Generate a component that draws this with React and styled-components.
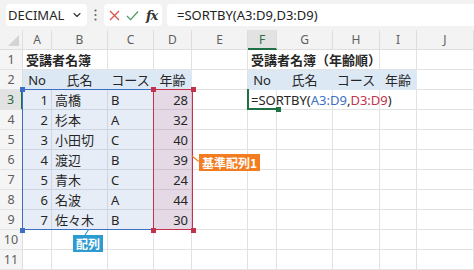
import React from 'react'
import styled, { createGlobalStyle } from 'styled-components'
import { ChevronDown } from 'lucide-react'

const FONT = `"Noto Sans", "Noto Sans CJK JP", sans-serif`

const GlobalStyle = createGlobalStyle`
  html, body { margin: 0; padding: 0; background: #fff; }
  body { font-family: ${FONT}; width: 474px; height: 270px; overflow: hidden; }
`

const COLS = ['A', 'B', 'C', 'D', 'E', 'F', 'G', 'H', 'I', 'J']
const WIDTHS = [29, 56, 46, 38, 56, 29, 56, 47, 37]
const HEAD_W = 23
const ROW_H = 20
const ROWS = 11

const colLeft = (i) => HEAD_W + WIDTHS.slice(0, i).reduce((a, b) => a + b, 0)
const rowTop = (r) => ROW_H * r // header row is 0

const BLUE = '#3c6fc3'
const RED = '#c4314b'
const GREEN = '#1f7145'
const HEADBLUE = '#dde8f5'
const FILLBLUE = '#e7edf6'
const FILLRED = '#e4d9e4'

const Page = styled.div`
  width: 474px;
  height: 270px;
  display: flex;
  flex-direction: column;
  overflow: hidden;
`

const TopBar = styled.div`
  height: 30px;
  flex: none;
  background: #f2f2f2;
  display: flex;
  align-items: center;
  padding-left: 6px;
  box-sizing: border-box;
`

const Box = styled.div`
  height: 22px;
  background: #fff;
  border-radius: 4px;
  display: flex;
  align-items: center;
  box-sizing: border-box;
`

const NameBox = styled(Box)`
  width: 81px;
  padding: 0 4px 0 2px;
  justify-content: space-between;
  font-size: 13px;
  color: #262626;
`

const Dots = styled.div`
  width: 17px;
  display: flex;
  justify-content: center;
`

const FxBox = styled(Box)`
  width: 58px;
  padding: 0 4px 0 5px;
  gap: 6px;
`

const FxText = styled.span`
  font-family: "DejaVu Serif", "Liberation Serif", serif;
  font-style: italic;
  font-weight: bold;
  font-size: 13px;
  color: #333;
  letter-spacing: -1px;
  margin-left: 1px;
`

const FormulaBox = styled(Box)`
  flex: 1;
  margin-left: 5px;
  border-radius: 4px 0 0 4px;
  padding-left: 10px;
  font-size: 13px;
  color: #222;
`

const Sheet = styled.div`
  position: relative;
  flex: 1;
`

const Grid = styled.div`
  display: grid;
  grid-template-columns: ${HEAD_W}px ${WIDTHS.map((w) => w + 'px').join(' ')} 1fr;
  grid-auto-rows: ${ROW_H}px;
`

const Corner = styled.div`
  background: #f3f3f3;
  border-right: 1px solid #dedede;
  border-bottom: 1px solid #dedede;
  position: relative;
  &::after {
    content: '';
    position: absolute;
    right: 3px;
    bottom: 3px;
    border-left: 11px solid transparent;
    border-bottom: 11px solid #d4d4d4;
  }
`

const ColHead = styled.div`
  background: ${(p) => (p.$active ? '#e2e2e2' : '#f3f3f3')};
  border-right: 1px solid #dedede;
  border-bottom: ${(p) => (p.$active ? `2px solid ${GREEN}` : '1px solid #dedede')};
  box-sizing: border-box;
  display: flex;
  align-items: center;
  justify-content: center;
  font-size: 12px;
  color: ${(p) => (p.$active ? '#2d6a46' : '#5e5e5e')};
`

const RowHead = styled.div`
  background: ${(p) => (p.$active ? '#e2e2e2' : '#f5f5f5')};
  border-right: ${(p) => (p.$active ? `2px solid ${GREEN}` : '1px solid #dedede')};
  border-bottom: 1px solid #e4e4e4;
  box-sizing: border-box;
  display: flex;
  align-items: center;
  justify-content: center;
  font-size: 12.5px;
  color: ${(p) => (p.$active ? '#2d6a46' : '#5e5e5e')};
`

const Cell = styled.div`
  background: ${(p) => p.$bg || '#fff'};
  border-right: 1px solid ${(p) => p.$line || '#e2e2e2'};
  border-bottom: 1px solid ${(p) => p.$hline || p.$line || '#e2e2e2'};
  box-sizing: border-box;
  padding: 0 3px;
  display: flex;
  align-items: center;
  justify-content: ${(p) => p.$align || 'flex-start'};
  font-size: 13px;
  font-weight: ${(p) => (p.$bold ? 700 : 400)};
  color: #262626;
  white-space: nowrap;
  overflow: ${(p) => (p.$spill ? 'visible' : 'hidden')};
  position: ${(p) => (p.$spill ? 'relative' : 'static')};
  z-index: ${(p) => (p.$spill ? 2 : 'auto')};
`

const Ref = styled.span`
  color: ${(p) => p.$c};
`

const Caret = styled.span`
  display: inline-block;
  width: 1px;
  height: 15px;
  background: #111;
  margin-left: 2px;
`

// coloured frame that Excel draws round a referenced range while editing
const RangeBox = styled.div`
  position: absolute;
  border: 1.5px solid ${(p) => p.$c};
  box-sizing: border-box;
  pointer-events: none;
  z-index: 3;
`

const corners = {
  tl: 'left: -3.5px; top: -3.5px;',
  tr: 'right: -3.5px; top: -3.5px;',
  bl: 'left: -3.5px; bottom: -3.5px;',
  br: 'right: -3.5px; bottom: -3.5px;',
}

const Handle = styled.i`
  position: absolute;
  width: 5px;
  height: 5px;
  background: ${(p) => p.$c};
  ${(p) => corners[p.$at]}
`

const ActiveEdge = styled.div`
  position: absolute;
  border-left: 2px solid ${GREEN};
  border-bottom: 2px solid ${GREEN};
  box-sizing: border-box;
  z-index: 3;
`

const Callout = styled.div`
  position: absolute;
  background: ${(p) => p.$c};
  color: #fff;
  font-family: "Noto Sans CJK JP", sans-serif;
  font-weight: 700;
  font-size: 12px;
  line-height: 17px;
  padding: 0 3px;
  z-index: 5;
  & > svg {
    position: absolute;
    overflow: visible;
  }
`

const ages = [28, 32, 40, 39, 24, 44, 30]
const names = ['高橋', '杉本', '小田切', '渡辺', '青木', '名波', '佐々木']
const course = ['B', 'A', 'C', 'B', 'C', 'A', 'B']
const heads = ['No', '氏名', 'コース', '年齢']

const cellProps = (r, c) => {
  // r: 1-based row, c: 0-based col index (A=0)
  if (r === 1) {
    if (c === 0) return { text: '受講者名簿', bold: true, spill: true, line: '#fff', hline: '#e2e2e2' }
    if (c === 5) return { text: '受講者名簿（年齢順）', bold: true, spill: true, line: '#fff', hline: '#e2e2e2' }
    if (c === 6) return { line: '#fff', hline: '#e2e2e2' }
    return {}
  }
  if (r === 2) {
    if (c <= 3) return { text: heads[c], bg: HEADBLUE, line: HEADBLUE, align: 'center' }
    if (c >= 5 && c <= 8) return { text: heads[c - 5], bg: HEADBLUE, line: HEADBLUE, align: 'center' }
    return {}
  }
  if (r >= 3 && r <= 9) {
    const i = r - 3
    if (c === 0) return { text: String(i + 1), bg: FILLBLUE, line: '#cdd5e2', align: 'flex-end' }
    if (c === 1) return { text: names[i], bg: FILLBLUE, line: '#cdd5e2' }
    if (c === 2) return { text: course[i], bg: FILLBLUE, line: '#cdd5e2' }
    if (c === 3) return { text: String(ages[i]), bg: FILLRED, line: '#d3c3d2', align: 'flex-end' }
  }
  return {}
}

const Formula = () => (
  <>
    =SORTBY(<Ref $c={BLUE}>A3:D9</Ref>,<Ref $c={RED}>D3:D9</Ref>)
  </>
)

export default function App() {
  const cells = [<Corner key="corner" />]
  COLS.forEach((c, i) => cells.push(<ColHead key={'h' + c} $active={i === 5}>{c}</ColHead>))
  for (let r = 1; r <= ROWS; r++) {
    cells.push(<RowHead key={'r' + r} $active={r === 3}>{r}</RowHead>)
    COLS.forEach((c, i) => {
      if (r === 3 && i === 5) {
        cells.push(
          <Cell key={c + r} $spill>
            <Formula />
            <Caret />
          </Cell>
        )
        return
      }
      const p = cellProps(r, i)
      cells.push(
        <Cell key={c + r} $bg={p.bg} $line={p.line} $hline={p.hline} $align={p.align} $bold={p.bold} $spill={p.spill}>
          {p.text}
        </Cell>
      )
    })
  }

  const aX = colLeft(0)
  const dX = colLeft(3)
  const eX = colLeft(4)
  const fX = colLeft(5)
  const gX = colLeft(6)
  const top3 = rowTop(3)
  const bot9 = rowTop(10)
  const rangeH = bot9 - top3 + 1

  return (
    <Page>
      <GlobalStyle />
      <TopBar>
        <NameBox>
          <span>DECIMAL</span>
          <ChevronDown size={12} strokeWidth={2.2} color="#333" />
        </NameBox>
        <Dots>
          <svg width="3" height="12" viewBox="0 0 3 12">
            <circle cx="1.5" cy="1.5" r="1.1" fill="#666" />
            <circle cx="1.5" cy="6" r="1.1" fill="#666" />
            <circle cx="1.5" cy="10.5" r="1.1" fill="#666" />
          </svg>
        </Dots>
        <FxBox>
          <svg width="11" height="11" viewBox="0 0 11 11">
            <path d="M1 1L10 10M10 1L1 10" stroke="#d9534f" strokeWidth="1.3" fill="none" />
          </svg>
          <svg width="13" height="11" viewBox="0 0 13 11">
            <path d="M1 6L4.6 9.6L12 1.5" stroke="#4f9a62" strokeWidth="1.3" fill="none" />
          </svg>
          <FxText>fx</FxText>
        </FxBox>
        <FormulaBox>
          <span>=SORTBY(A3:D9,D3:D9)</span>
        </FormulaBox>
      </TopBar>
      <Sheet>
        <Grid>{cells}</Grid>

        <RangeBox $c={BLUE} style={{ left: aX - 1, top: top3 - 1, width: eX - aX + 2, height: rangeH }}>
          <Handle $c={BLUE} $at="tl" />
          <Handle $c={BLUE} $at="bl" />
        </RangeBox>
        <RangeBox $c={RED} style={{ left: dX - 1, top: top3 - 1, width: eX - dX + 2, height: rangeH }}>
          <Handle $c={RED} $at="tl" />
          <Handle $c={RED} $at="tr" />
          <Handle $c={RED} $at="bl" />
          <Handle $c={RED} $at="br" />
        </RangeBox>

        <ActiveEdge style={{ left: fX - 1, top: top3 - 1, width: gX - fX + 1, height: ROW_H + 1 }}>
          <Handle $c={GREEN} $at="br" />
        </ActiveEdge>

        <Callout $c="#f47c20" style={{ left: eX + 7, top: 124 }}>
          <svg width="8" height="8" style={{ left: -7, top: 2 }}>
            <path d="M0 0L6 5L8 5" stroke="#f47c20" strokeWidth="1.2" fill="none" />
          </svg>
          基準配列1
        </Callout>

        <Callout $c="#2e9bd0" style={{ left: 73, top: bot9 + 5 }}>
          <svg width="6" height="6" style={{ left: 11, top: -6 }}>
            <path d="M5 0L1 6" stroke="#2e9bd0" strokeWidth="1.2" fill="none" />
          </svg>
          配列
        </Callout>
      </Sheet>
    </Page>
  )
}
